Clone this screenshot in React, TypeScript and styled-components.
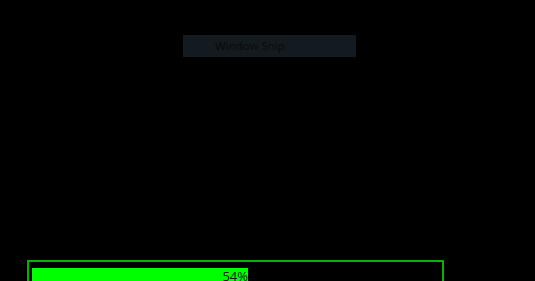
import React from "react";
import styled, { createGlobalStyle } from "styled-components";

const Global = createGlobalStyle`
  html, body { margin: 0; padding: 0; background: #000; }
  body { width: 535px; height: 281px; overflow: hidden; font-family: "Open Sans", "Noto Sans", sans-serif; }
`;

const Page = styled.div`
  width: 535px;
  height: 281px;
  background: #000;
  display: flex;
  flex-direction: column;
  box-sizing: border-box;
  padding-top: 35px;
  overflow: hidden;
`;

const TitleBar = styled.div`
  align-self: flex-start;
  margin-left: 183px;
  width: 173px;
  height: 22px;
  background: #131a20;
  display: flex;
  align-items: center;
  padding-left: 32px;
  box-sizing: border-box;
  color: #080a0c;
  font-size: 11.5px;
  line-height: 22px;
`;

const Spacer = styled.div`
  flex: 1;
`;

const ProgressFrame = styled.div`
  margin-left: 27px;
  width: 417px;
  height: 40px;
  box-sizing: border-box;
  border: 2px solid #00b400;
  padding: 6px 10px 0 3px;
  flex-shrink: 0;
  margin-bottom: -19px;
`;

const Track = styled.div`
  width: 400px;
  height: 24px;
`;

const Fill = styled.div`
  height: 100%;
  background: #00ff00;
  display: flex;
  justify-content: flex-end;
  align-items: flex-start;
  color: #0a200a;
  font-size: 13px;
  line-height: 17px;
  overflow: visible;
  white-space: nowrap;
`;

export default function App() {
  const pct = 54;
  return (
    <>
      <Global />
      <Page>
        <TitleBar>Window Snip</TitleBar>
        <Spacer />
        <ProgressFrame>
          <Track>
            <Fill style={{ width: `${pct}%` }}>{pct}%</Fill>
          </Track>
        </ProgressFrame>
      </Page>
    </>
  );
}
